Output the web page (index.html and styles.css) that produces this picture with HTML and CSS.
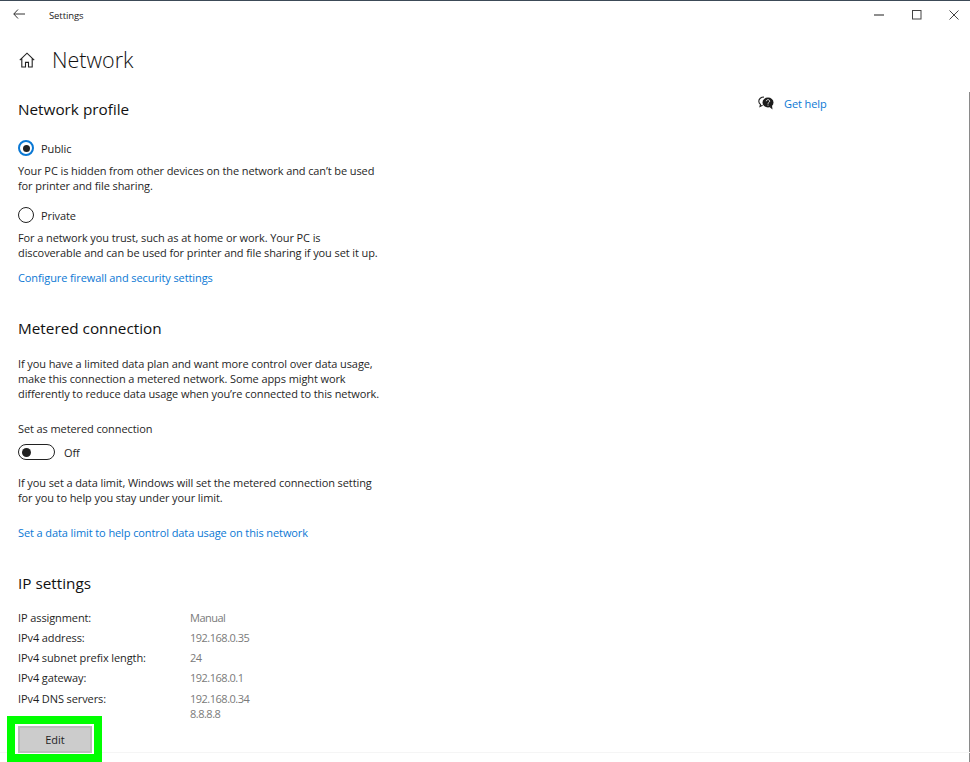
FILE: index.html
```html
<!DOCTYPE html>
<html lang="en">
<head>
<meta charset="utf-8">
<title>Settings</title>
<link rel="stylesheet" href="styles.css">
</head>
<body>
<div class="window">
  <header class="titlebar">
    <div class="title-left">
      <svg class="back-icon" width="12" height="10" viewBox="0 0 12 10"><path d="M5 .5 .8 5 5 9.500M.8 5H12" fill="none" stroke="#333" stroke-width="1"/></svg>
      <span class="app-name">Settings</span>
    </div>
    <div class="controls">
      <svg width="10" height="10" viewBox="0 0 10 10"><path d="M0 5h10" stroke="#444" stroke-width="1.200"/></svg>
      <svg width="10" height="10" viewBox="0 0 10 10"><rect x=".5" y=".5" width="8.500" height="8.500" fill="none" stroke="#444" stroke-width="1"/></svg>
      <svg width="10" height="10" viewBox="0 0 10 10"><path d="M.5.5l9 9M9.500.5l-9 9" stroke="#444" stroke-width="1"/></svg>
    </div>
  </header>
  <div class="scrollbar"></div>
  <div class="footer-rule"></div>
  <main class="page">
    <div class="content">
      <div class="page-head">
        <svg class="home-icon" width="16" height="16" viewBox="0 0 16 16"><path d="M.8 8.200 8 1.200l7.200 7M2.800 6.600V15h3.700v-4.600h3V15h3.700V6.600" fill="none" stroke="#222" stroke-width="1.100"/></svg>
        <h1>Network</h1>
      </div>

      <h2 class="h-first">Network profile</h2>
      <div class="radio-row r-public"><span class="radio on"></span><span>Public</span></div>
      <p class="desc d-radio">Your PC is hidden from other devices on the network and can’t be used<br>for printer and file sharing.</p>
      <div class="radio-row r-private"><span class="radio"></span><span>Private</span></div>
      <p class="desc d-private">For a network you trust, such as at home or work. Your PC is<br>discoverable and can be used for printer and file sharing if you set it up.</p>
      <a class="link l-firewall" href="#">Configure firewall and security settings</a>

      <h2 class="h-metered">Metered connection</h2>
      <p class="desc d-metered">If you have a limited data plan and want more control over data usage,<br>make this connection a metered network. Some apps might work<br>differently to reduce data usage when you’re connected to this network.</p>
      <div class="label-set">Set as metered connection</div>
      <div class="toggle-row"><span class="toggle"><span class="knob"></span></span><span>Off</span></div>
      <p class="desc d-limit">If you set a data limit, Windows will set the metered connection setting<br>for you to help you stay under your limit.</p>
      <a class="link l-limit" href="#">Set a data limit to help control data usage on this network</a>

      <h2 class="h-ip">IP settings</h2>
      <dl class="ip-grid">
        <dt>IP assignment:</dt><dd>Manual</dd>
        <dt>IPv4 address:</dt><dd>192.168.0.35</dd>
        <dt>IPv4 subnet prefix length:</dt><dd>24</dd>
        <dt>IPv4 gateway:</dt><dd>192.168.0.1</dd>
        <dt>IPv4 DNS servers:</dt><dd>192.168.0.34<br>8.8.8.8</dd>
      </dl>
      <div class="highlight"><button class="edit" type="button">Edit</button></div>
    </div>
    <aside class="help">
      <svg width="16" height="14" viewBox="0 0 16 14"><path d="M6 1C3 1 .8 2.900.8 5.200c0 1.300.7 2.400 1.700 3.200L2 10.500l2.600-1.300" fill="none" stroke="#222" stroke-width="1.100"/><ellipse cx="10" cy="6.500" rx="5.500" ry="5" fill="#1c1c1c"/><path d="M11.500 11l3 2.500-.5-4z" fill="#1c1c1c"/><path d="M8.300 5.200c0-2 3.400-2 3.400 0 0 1.200-1.700 1.200-1.700 2.500M10 8.600v1" fill="none" stroke="#fff" stroke-width=".9"/></svg>
      <a class="link" href="#">Get help</a>
    </aside>
  </main>
</div>
</body>
</html>
```
FILE: styles.css
```css
* { box-sizing: border-box; }
html, body { margin: 0; height: 100%; overflow: hidden; background: #fff; }
body { font-family: "Open Sans", Roboto, sans-serif; font-size: 11px; letter-spacing: -0.1px; line-height: 15px; color: #1f1f1f; }
.window { position: relative; height: 762px; overflow: hidden; border-top: 1px solid #3c4a57; }
.titlebar { height: 28px; display: flex; justify-content: space-between; align-items: center; }
.title-left { display: flex; align-items: center; padding-left: 13px; }
.back-icon { margin-top: -2px; }
.app-name { margin-left: 24px; font-size: 9.500px; color: #222; }
.controls { display: flex; gap: 27.500px; padding-right: 11px; margin-top: -1px; }
.scrollbar { position: absolute; right: 0; top: 91px; width: 1.500px; height: 671px; background: #8a8a8a; }
.footer-rule { position: absolute; left: 0; right: 0; top: 751px; height: 1px; background: #f5f5f5; }
.page { display: flex; padding-left: 18px; }
.content { width: 740px; flex: none; }
.page-head { display: flex; align-items: center; height: 32px; margin-top: 15px; }
.home-icon { margin-left: 1px; }
h1 { margin: 0 0 0 17px; font-size: 21.500px; font-weight: 300; letter-spacing: 0; line-height: 32px; color: #111; }
h2 { margin: 0; font-size: 15.300px; font-weight: 400; letter-spacing: 0; line-height: 22px; color: #111; }
.h-first { margin-top: 22px; }
.h-metered { margin-top: 32px; }
.h-ip { margin-top: 32px; }
.radio-row { display: flex; align-items: center; gap: 7px; height: 16px; }
.r-public { margin-top: 20px; }
.r-private { margin-top: 14px; }
.radio { width: 16px; height: 16px; border-radius: 50%; border: 1.500px solid #222; display: flex; align-items: center; justify-content: center; }
.radio.on { border: 2px solid #0a78d4; }
.radio.on::after { content: ""; width: 7px; height: 7px; border-radius: 50%; background: #222; }
.desc { margin: 0; }
.d-radio { margin-top: 7px; }
.d-private { margin-top: 7px; }
.link { color: #0a78d4; text-decoration: none; display: block; }
.l-firewall { margin-top: 10px; }
.d-metered { margin-top: 17px; }
.label-set { margin-top: 20px; }
.toggle-row { display: flex; align-items: center; gap: 9px; margin-top: 8px; height: 16px; }
.toggle { width: 37px; height: 16px; border-radius: 8px; border: 1.500px solid #222; display: flex; align-items: center; padding-left: 3px; }
.knob { width: 9px; height: 9px; border-radius: 50%; background: #222; }
.d-limit { margin-top: 15px; }
.l-limit { margin-top: 20px; }
.ip-grid { display: grid; grid-template-columns: 172px 1fr; row-gap: 5.150px; margin: 16px 0 0; }
dt { margin: 0; }
dd { margin: 0; color: #7a7a7a; letter-spacing: -0.5px; }
.highlight { position: relative; width: 95px; height: 46px; margin: -5px 0 0 -11px; border: 8px solid #00ff00; background: #fff; padding: 2px 3px; }
.edit { display: block; width: 74px; height: 27px; margin: 0; padding: 0; border: 2px solid #bcbcbc; background: #ccc; font: inherit; color: #1f1f1f; }
.help { display: flex; align-items: center; gap: 10px; height: 16px; margin-top: 66px; }
```
